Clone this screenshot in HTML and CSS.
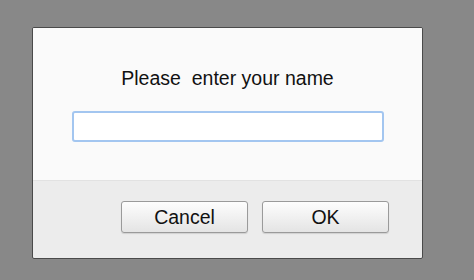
FILE: index.html
```html
<!DOCTYPE html>
<html lang="en">
<head>
    <meta charset="UTF-8">
    <title>Prompt</title>
    <link rel="stylesheet" href="styles.css">
</head>
<body>
    <div class="dialog">
        <div class="dialog-body">
            <p class="prompt">Please&nbsp; enter your name</p>
            <input type="text" class="name-input">
        </div>
        <div class="dialog-footer">
            <button class="btn">Cancel</button>
            <button class="btn">OK</button>
        </div>
    </div>
</body>
</html>
```

FILE: styles.css
```css
body {
    margin: 0;
    padding: 27px 0 0 32px;
    background-color: #888888;
    font-family: "Liberation Sans", Arial, sans-serif;
    height: 280px;
    box-sizing: border-box;
    overflow: hidden;
}
.dialog {
    width: 391px;
    height: 232px;
    box-sizing: border-box;
    border: 1px solid #4a4a4a;
    border-radius: 2px;
    background: #ececec;
    display: flex;
    flex-direction: column;
    overflow: hidden;
}
.dialog-body {
    height: 153px;
    background: #fafafa;
    border-bottom: 1px solid #e2e2e2;
    box-sizing: border-box;
    padding-top: 39px;
    display: flex;
    flex-direction: column;
    align-items: center;
}
.prompt {
    margin: 0;
    font-size: 19.5px;
    line-height: 23px;
    color: #111;
}
.name-input {
    margin-top: 21px;
    width: 312px;
    height: 31px;
    box-sizing: border-box;
    border: 2px solid #a3c6f0;
    border-radius: 3px;
    background: #fff;
    outline: none;
}
.dialog-footer {
    display: flex;
    justify-content: flex-end;
    gap: 14px;
    padding: 20px 33px 0 0;
}
.btn {
    width: 127px;
    height: 32px;
    border: 1px solid #9a9a9a;
    border-radius: 3px;
    background: linear-gradient(#fdfdfd, #e4e4e4);
    font-family: "Liberation Sans", Arial, sans-serif;
    font-size: 19.5px;
    color: #111;
    padding: 0;
    box-shadow: 0 1px 1px rgba(0, 0, 0, 0.12);
}
```
